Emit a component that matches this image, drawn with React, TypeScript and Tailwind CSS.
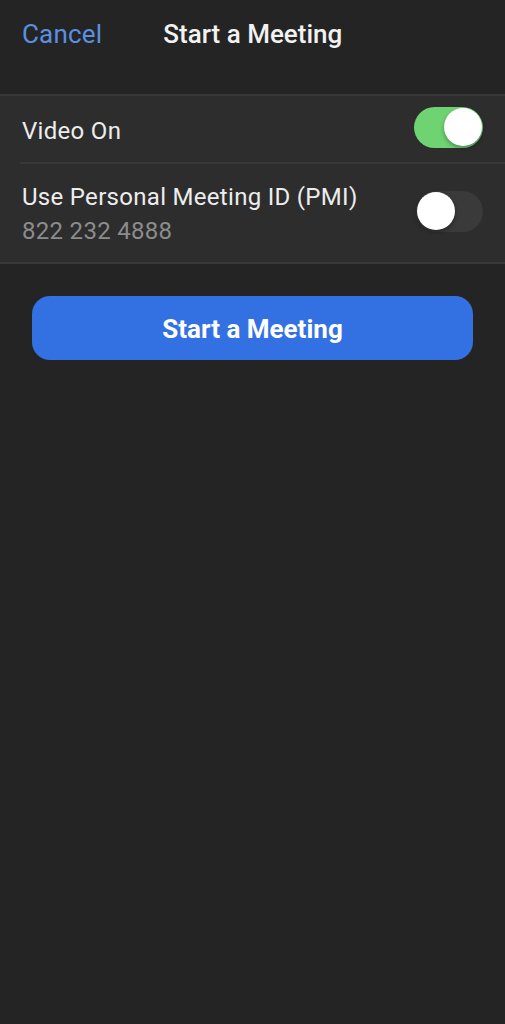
const font = { fontFamily: 'Roboto, "Noto Sans", sans-serif' };

function Toggle({ on }: { on: boolean }) {
  return (
    <div
      className={`mb-[4px] flex h-[41px] shrink-0 items-center rounded-full px-px ${
        on ? 'w-[69px] justify-end bg-[#6fd371]' : 'w-[67px] justify-start bg-[#3a3a3a]'
      }`}
    >
      <div className="h-[38px] w-[38px] rounded-full bg-white shadow-[0_2px_4px_rgba(0,0,0,0.35)]" />
    </div>
  );
}

export default function App() {
  return (
    <div className="min-h-[1024px] w-full bg-[#242424] text-white" style={font}>
      <header className="flex h-[94px] items-start pt-[18px]">
        <span className="ml-[22px] text-[26px] leading-[32px] tracking-[0.2px] text-[#5b8fe0]">
          Cancel
        </span>
        <span className="ml-[61px] text-[26px] font-medium leading-[32px] text-[#f2f2f2]">
          Start a Meeting
        </span>
      </header>

      <section className="border-y-2 border-[#383838] bg-[#2d2d2d]">
        <div className="flex h-[66px] items-center justify-between pl-[22px] pr-[22px]">
          <span className="pt-[3px] text-[24px] tracking-[0.3px] text-[#ededed]">Video On</span>
          <Toggle on />
        </div>
        <div className="ml-[20px] h-[2px] bg-[#383838]" />
        <div className="flex h-[98px] items-center justify-between pl-[22px] pr-[22px]">
          <div className="flex flex-col pt-[1px] tracking-[0.3px]">
            <span className="text-[24px] leading-[34px] text-[#ededed]">
              Use Personal Meeting ID (PMI)
            </span>
            <span className="text-[24px] leading-[34px] text-[#8c8c8c]">822 232 4888</span>
          </div>
          <Toggle on={false} />
        </div>
      </section>

      <div className="px-[32px] pt-[32px]">
        <button
          type="button"
          className="flex h-[64px] w-[441px] items-center justify-center rounded-[18px] bg-[#3371e3] pt-[2px] text-[26px] font-bold text-white"
        >
          Start a Meeting
        </button>
      </div>
    </div>
  );
}
